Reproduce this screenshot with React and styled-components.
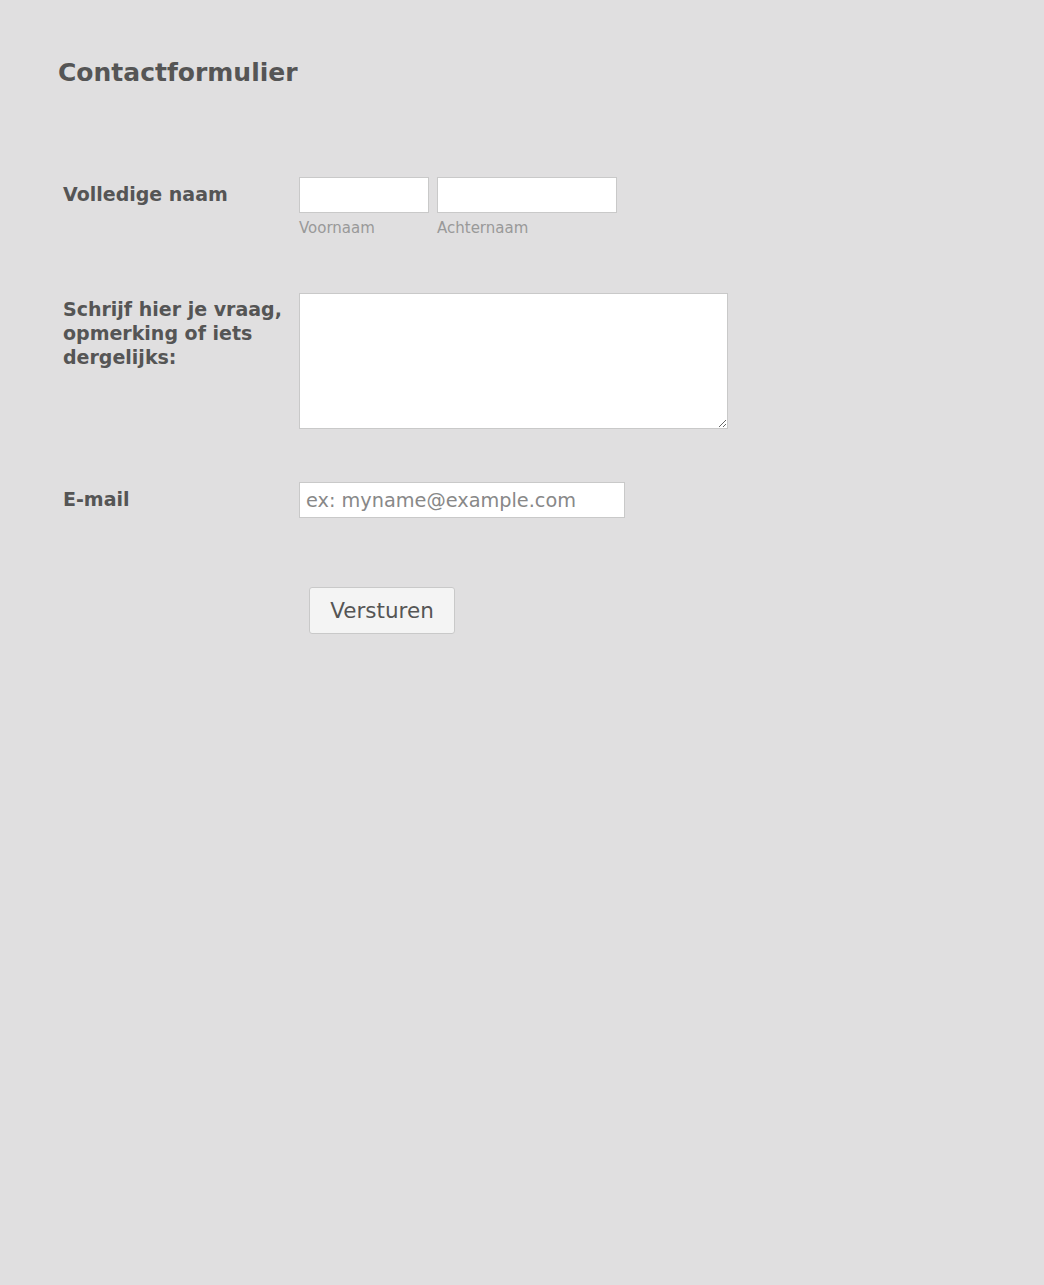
import React from 'react';
import styled, { createGlobalStyle } from 'styled-components';

const GlobalStyle = createGlobalStyle`
  html, body {
    margin: 0;
    padding: 0;
    background: #e0dfe0;
    min-height: 100%;
  }

  body {
    font-family: Verdana, 'DejaVu Sans', sans-serif;
    color: #555;
  }
`;

const Page = styled.div`
  min-height: 1285px;
  padding: 58px 0 0 58px;
  box-sizing: border-box;
`;

const Title = styled.h1`
  margin: 0 0 89px 0;
  font-size: 25px;
  font-weight: bold;
  line-height: 30px;
  color: #555;
`;

const Form = styled.form`
  display: flex;
  flex-direction: column;
  padding-left: 5px;
`;

const Row = styled.div`
  display: grid;
  grid-template-columns: 236px auto;
  align-items: start;
  margin-bottom: ${({ $gap }) => $gap}px;
`;

const Label = styled.label`
  font-size: 19px;
  font-weight: bold;
  line-height: 24px;
  padding-top: ${({ $top }) => $top || 5}px;
  color: #555;
  width: 232px;
`;

const Fields = styled.div`
  display: flex;
  gap: 8px;
`;

const Field = styled.div`
  display: flex;
  flex-direction: column;
`;

const TextInput = styled.input`
  box-sizing: border-box;
  width: ${({ $w }) => $w}px;
  height: 36px;
  border: 1px solid #c9c9c9;
  background: #fff;
  padding: 0 6px;
  font-family: Verdana, 'DejaVu Sans', sans-serif;
  font-size: 19.3px;
  color: #555;
  outline: none;

  &::placeholder {
    color: #888;
  }
`;

const SubLabel = styled.span`
  margin-top: 7px;
  font-size: 15px;
  line-height: 16px;
  color: #999;
`;

const TextArea = styled.textarea`
  display: block;
  box-sizing: border-box;
  width: 429px;
  height: 136px;
  border: 1px solid #c9c9c9;
  background: #fff;
  font-family: Verdana, 'DejaVu Sans', sans-serif;
  font-size: 16px;
  margin: 0;
  outline: none;
`;

const SubmitRow = styled.div`
  padding-left: 246px;
`;

const Button = styled.button`
  box-sizing: border-box;
  width: 146px;
  height: 47px;
  border: 1px solid #c9c9c9;
  border-radius: 3px;
  background: #f4f4f4;
  color: #555;
  font-family: Verdana, 'DejaVu Sans', sans-serif;
  font-size: 21.5px;
  cursor: pointer;
`;

const App = () => (
  <>
    <GlobalStyle />
    <Page>
      <Title>Contactformulier</Title>
      <Form onSubmit={(e) => e.preventDefault()}>
        <Row $gap={57}>
          <Label $top={5}>Volledige naam</Label>
          <Fields>
            <Field>
              <TextInput $w={130} />
              <SubLabel>Voornaam</SubLabel>
            </Field>
            <Field>
              <TextInput $w={180} />
              <SubLabel>Achternaam</SubLabel>
            </Field>
          </Fields>
        </Row>
        <Row $gap={53}>
          <Label $top={4}>
            Schrijf hier je vraag, opmerking of iets dergelijks:
          </Label>
          <TextArea />
        </Row>
        <Row $gap={69}>
          <Label $top={5}>E-mail</Label>
          <TextInput $w={326} placeholder="ex: myname@example.com" />
        </Row>
        <SubmitRow>
          <Button type="submit">Versturen</Button>
        </SubmitRow>
      </Form>
    </Page>
  </>
);

export default App;
